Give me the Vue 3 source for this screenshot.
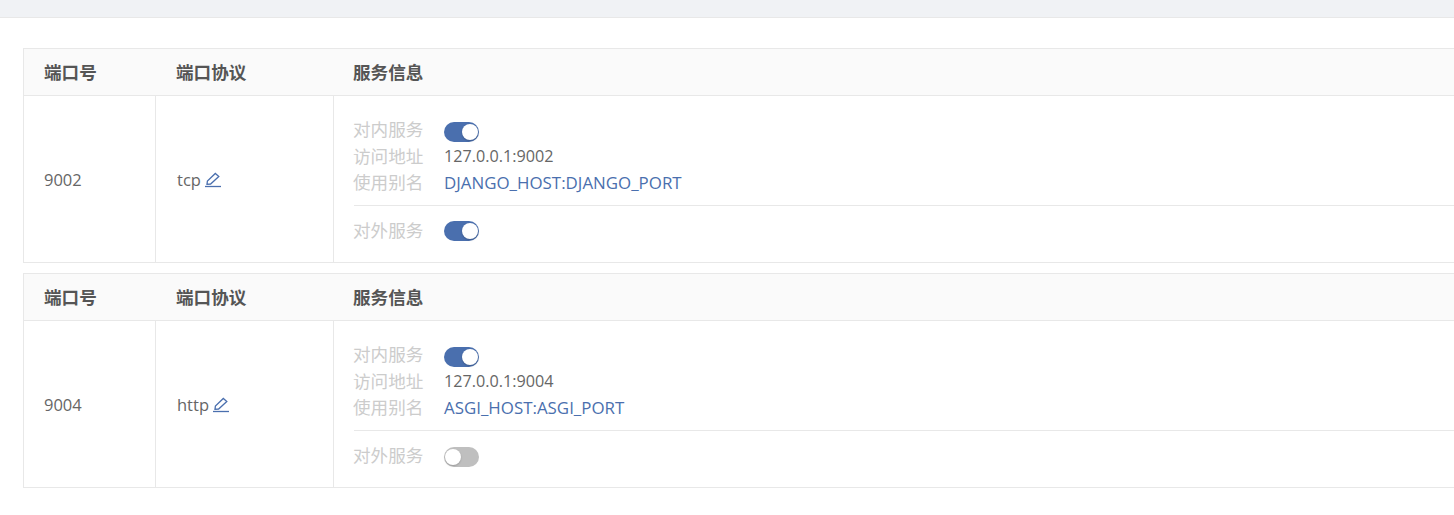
<script setup>
import { ref } from 'vue'

const ports = ref([
  { port: 9002, protocol: 'tcp', inner: true, outer: true, addr: '127.0.0.1:9002', alias: 'DJANGO_HOST:DJANGO_PORT' },
  { port: 9004, protocol: 'http', inner: true, outer: false, addr: '127.0.0.1:9004', alias: 'ASGI_HOST:ASGI_PORT' },
])
</script>

<template>
<div class="page">
  <div class="top-bar"></div>
  <div class="content">
    <div v-for="p in ports" :key="p.port" class="port-table">
      <div class="head">
        <div>端口号</div>
        <div>端口协议</div>
        <div>服务信息</div>
      </div>
      <div class="row">
        <div class="cell num">{{ p.port }}</div>
        <div class="cell num proto">
          <span>{{ p.protocol }}</span>
          <svg class="edit" width="16" height="16" viewBox="0 0 16 16" fill="none" stroke="#4a6fae" stroke-width="1.3">
            <path d="M2 12.3 L2.4 9 L10.3 1.5 L13.8 4.6 L5.6 12 Z" />
            <path d="M0 14.5 H16" />
          </svg>
        </div>
        <div class="cell info">
          <div class="line first">
            <span class="label">对内服务</span>
            <span class="switch" :class="{ on: p.inner }"><i></i></span>
          </div>
          <div class="line">
            <span class="label">访问地址</span>
            <span class="value">{{ p.addr }}</span>
          </div>
          <div class="line">
            <span class="label">使用别名</span>
            <span class="value link">{{ p.alias }}</span>
          </div>
          <div class="divider"></div>
          <div class="line last">
            <span class="label">对外服务</span>
            <span class="switch" :class="{ on: p.outer }"><i></i></span>
          </div>
        </div>
      </div>
    </div>
  </div>
</div>
</template>

<style>
html, body {
  margin: 0;
  background: #fff;
  overflow: hidden;
}
</style>

<style scoped>
.page {
  width: 1454px;
  height: 515px;
  overflow: hidden;
  background: #fff;
  font-family: "Open Sans", "Noto Sans CJK SC", sans-serif;
}

.top-bar {
  height: 17px;
  background: #f0f2f5;
  border-bottom: 1px solid #e8e8e8;
}

.content {
  padding: 30px 0 0 23px;
  width: 1500px;
  display: flex;
  flex-direction: column;
  gap: 10px;
}

.port-table {
  border: 1px solid #e8e8e8;
}

.head {
  display: grid;
  grid-template-columns: 132px 177px 1fr;
  height: 46px;
  align-items: center;
  background: #fafafa;
  border-bottom: 1px solid #e8e8e8;
  font-family: "Noto Sans CJK SC", sans-serif;
  font-size: 17.6px;
  font-weight: 700;
  color: #555;
}

.head > div {
  padding: 0 0 2px 20px;
}

.row {
  display: grid;
  grid-template-columns: 132px 178px 1fr;
  height: 166px;
}

.cell {
  border-right: 1px solid #e8e8e8;
  display: flex;
  align-items: center;
}

.num {
  padding-left: 20px;
  font-size: 16.5px;
  color: #666;
}

.proto {
  padding-left: 21px;
  gap: 4px;
}

.edit {
  flex: none;
  margin-top: 2px;
}

.info {
  border-right: 0;
  display: block;
  padding: 21px 0 0 20px;
}

.line {
  display: flex;
  align-items: center;
  height: 26px;
}

.label {
  width: 90px;
  flex: none;
  margin: -2px 0 0 -1px;
  padding-right: 1px;
  font-family: "Noto Sans CJK SC", sans-serif;
  font-size: 17.6px;
  color: #ccc;
}

.first .label {
  margin-top: -4px;
}

.value {
  margin-top: -1px;
  font-size: 16.2px;
  color: #666;
}

.link {
  margin-top: 0;
  font-size: 16.9px;
  color: #4a6fae;
}

.divider {
  height: 1px;
  background: #e8e8e8;
  margin: 10px 0 11px;
}

.switch {
  width: 35px;
  height: 20px;
  margin-top: 2px;
  border-radius: 10px;
  background: #bfbfbf;
  position: relative;
  flex: none;
}

.first .switch {
  margin-top: 4px;
}

.port-table:last-child .last .switch {
  margin-top: 4px;
}

.switch.on {
  background: #4a6fae;
}

.switch i {
  position: absolute;
  top: 2px;
  left: 1px;
  width: 16px;
  height: 16px;
  border-radius: 50%;
  background: #fff;
  box-shadow: 0 1px 2px rgba(0, 0, 0, 0.2);
}

.switch.on i {
  left: 18px;
}
</style>
